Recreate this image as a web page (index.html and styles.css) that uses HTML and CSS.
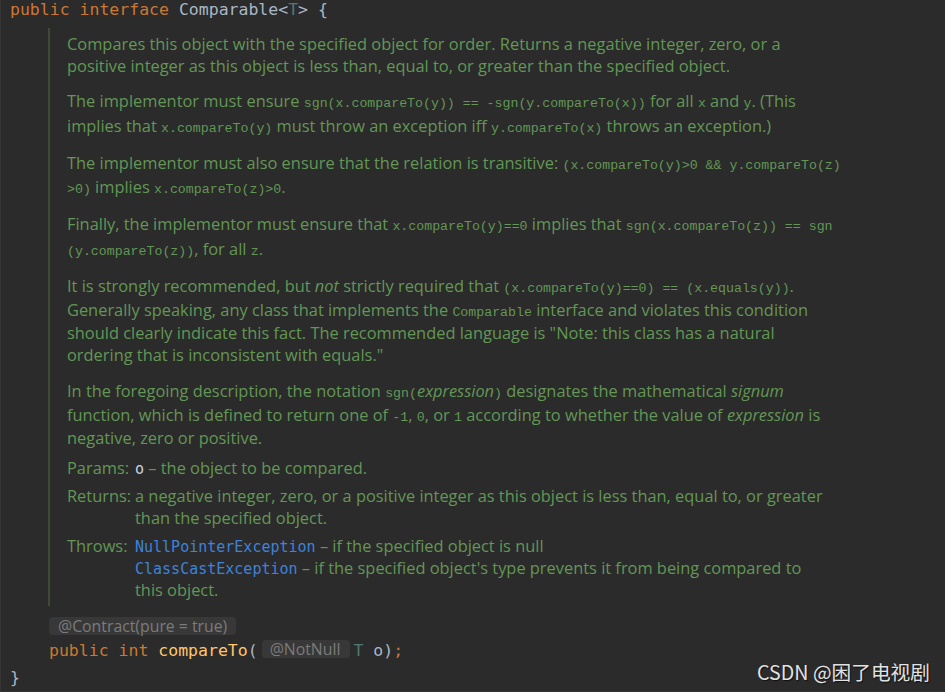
FILE: index.html
```html
<!DOCTYPE html>
<html>
<head>
<meta charset="utf-8">
<link rel="stylesheet" href="styles.css">
</head>
<body>
<div class="editor">
  <div class="code-line top"><span class="kw">public interface</span> <span class="cls">Comparable</span>&lt;<span class="tp">T</span>&gt; {</div>
  <div class="doc">
    <p>Compares this object with the specified object for order. Returns a negative integer, zero, or a<br>positive integer as this object is less than, equal to, or greater than the specified object.</p>
    <p>The implementor must ensure <code class="c p">sgn(x.compareTo(y)) == -sgn(y.compareTo(x))</code> for all <code class="c">x</code> and <code class="c">y</code>. (This<br>implies that <code class="c p">x.compareTo(y)</code> must throw an exception iff <code class="c p">y.compareTo(x)</code> throws an exception.)</p>
    <p>The implementor must also ensure that the relation is transitive: <code class="c p">(x.compareTo(y)&gt;0 &amp;&amp; y.compareTo(z)</code><br><code class="c p">&gt;0)</code> implies <code class="c p">x.compareTo(z)&gt;0</code>.</p>
    <p>Finally, the implementor must ensure that <code class="c p">x.compareTo(y)==0</code> implies that <code class="c p">sgn(x.compareTo(z)) == sgn</code><br><code class="c p">(y.compareTo(z))</code>, for all <code class="c">z</code>.</p>
    <p>It is strongly recommended, but <em>not</em> strictly required that <code class="c p">(x.compareTo(y)==0) == (x.equals(y))</code>.<br>Generally speaking, any class that implements the <code class="c">Comparable</code> interface and violates this condition<br>should clearly indicate this fact. The recommended language is "Note: this class has a natural<br>ordering that is inconsistent with equals."</p>
    <p>In the foregoing description, the notation <code class="c p">sgn(<em class="ci">expression</em>)</code> designates the mathematical <em>signum</em><br>function, which is defined to return one of <code class="c">-1</code>, <code class="c">0</code>, or <code class="c">1</code> according to whether the value of <em>expression</em> is<br>negative, zero or positive.</p>
    <dl class="tags">
      <dt>Params:</dt>
      <dd><code class="param">o</code> – the object to be compared.</dd>
      <dt>Returns:</dt>
      <dd>a negative integer, zero, or a positive integer as this object is less than, equal to, or greater<br>than the specified object.</dd>
      <dt>Throws:</dt>
      <dd><a class="link">NullPointerException</a> – if the specified object is null<br><a class="link">ClassCastException</a> – if the specified object's type prevents it from being compared to<br>this object.</dd>
    </dl>
  </div>
  <div class="code-line hint-row"><span class="hint">@Contract(pure = true)</span></div>
  <div class="code-line method"><span class="kw">public int</span> <span class="fn">compareTo</span>(<span class="hint inline">@NotNull</span><span class="tp">T</span> o)<span class="kw">;</span></div>
  <div class="code-line close">}</div>
</div>
<div class="watermark">CSDN @困了电视剧</div>
</body>
</html>
```

FILE: styles.css
```css
html, body {
  margin: 0;
  padding: 0;
}
body {
  background: #2b2b2b;
  width: 945px;
  height: 692px;
  overflow: hidden;
  position: relative;
  box-shadow: inset 1px 0 0 #353535, inset 0 -1px 0 #333333;
}
.editor {
  display: flex;
  flex-direction: column;
}
.code-line {
  font-family: "DejaVu Sans Mono", monospace;
  font-size: 16.5px;
  color: #a9b7c6;
  white-space: pre;
}
.top {
  line-height: 20px;
  padding-left: 10px;
}
.kw { color: #cc7832; }
.cls { color: #a9b7c6; }
.tp { color: #507874; }
.fn { color: #ffc66d; }

.doc {
  margin: 8px 0 0 48px;
  border-left: 2px solid #3d4a36;
  padding: 5px 0 5px 17px;
  color: #629755;
  font-family: "Open Sans", sans-serif;
  font-size: 16.4px;
  line-height: 22.2px;
  white-space: nowrap;
}
.doc p {
  margin: 0 0 12.8px;
}
.doc p:nth-of-type(5) {
  margin-bottom: 14px;
}
.doc p:last-of-type {
  margin-bottom: 8px;
}
.c {
  font-family: "Liberation Mono", monospace;
  font-size: 13.25px;
  line-height: 1;
  color: #629755;
}
.c.p {
  line-height: 21.4px;
}
.ci {
  font-family: "Open Sans", sans-serif;
  font-size: 16.4px;
  font-style: italic;
}
em {
  font-style: italic;
}
.tags {
  display: grid;
  grid-template-columns: 68px 1fr;
  row-gap: 5.6px;
  margin: 0;
}
.tags dt, .tags dd {
  margin: 0;
}
.param {
  font-family: "DejaVu Sans Mono", monospace;
  font-size: 15px;
  line-height: 1;
  color: #c9d3de;
}
.link {
  font-family: "DejaVu Sans Mono", monospace;
  font-size: 15px;
  line-height: 1;
  color: #3f82d8;
}

.hint-row {
  margin-top: 7.5px;
  height: 24px;
  padding-left: 49px;
  display: flex;
  align-items: center;
}
.hint {
  font-family: "Open Sans", sans-serif;
  font-size: 15.8px;
  color: #7b7b7b;
  background: #383838;
  border-radius: 4px;
  padding: 0 9px;
  height: 18px;
  line-height: 18px;
  display: inline-block;
}
.hint.inline {
  margin: 0 3px 0 4px;
  padding: 0 10px 0 8px;
  vertical-align: 1px;
}
.method {
  line-height: 25px;
  padding-left: 49px;
}
.close {
  line-height: 29px;
  padding-left: 10px;
}
.watermark {
  position: absolute;
  right: 15px;
  bottom: 7px;
  font-family: "Noto Sans CJK SC", sans-serif;
  font-size: 19.7px;
  line-height: 26px;
  color: #e2e2e2;
  text-shadow: 1px 1px 1px #111;
}
```
